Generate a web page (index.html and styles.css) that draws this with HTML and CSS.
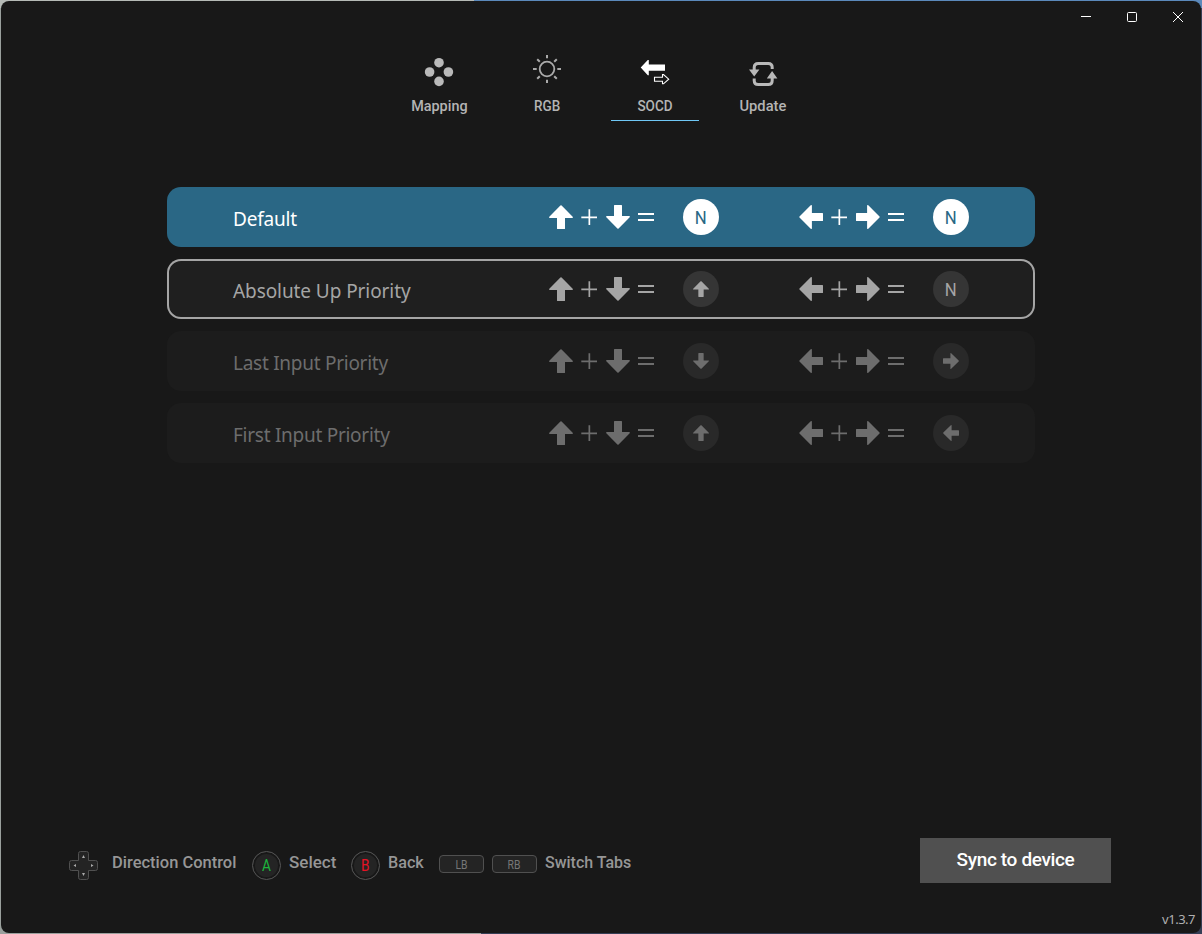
FILE: index.html
```html
<!DOCTYPE html>
<html lang="en">
<head>
    <meta charset="UTF-8">
    <meta name="viewport" content="width=device-width, initial-scale=1.0">
    <title>SOCD</title>
    <link rel="stylesheet" href="styles.css">
</head>
<body>
    <svg class="symbols">
        <symbol id="arrow" viewBox="0 0 24 24"><path d="M11.4.5Q12 0 12.6.5L23.7 11.7Q24.4 12.9 23.2 12.9H16V23.4Q16 24 15.4 24H8.6Q8 24 8 23.4V12.9H.8Q-.4 12.9 .3 11.7Z"/></symbol>
        <symbol id="plus" viewBox="0 0 16 16"><path d="M7.5 .3h1.7v7.2H16v1.8H9.2V16H7.5V9.3H.3V7.5h7.2z"/></symbol>
        <symbol id="equals" viewBox="0 0 16 16"><path d="M0 4h16v2H0zM0 10h16v2H0z"/></symbol>
    </svg>

    <div class="window">
        <div class="titlebar">
            <span class="win-btn"><svg width="10" height="10"><path d="M0 4.5h10"/></svg></span>
            <span class="win-btn"><svg width="10" height="10"><rect x=".5" y=".5" width="9" height="9" rx="1"/></svg></span>
            <span class="win-btn"><svg width="10" height="10"><path d="M0 0l10 10M10 0L0 10"/></svg></span>
        </div>

        <nav class="tabs">
            <div class="tab">
                <svg width="32" height="32" fill="#b9b9b9"><circle cx="16" cy="9.7" r="4.8"/><circle cx="6.6" cy="19" r="4.8"/><circle cx="25.4" cy="19" r="4.8"/><circle cx="16" cy="28.4" r="4.8"/></svg>
                <span class="mapping">Mapping</span>
            </div>
            <div class="tab">
                <svg width="32" height="32" fill="none" stroke="#aaa" stroke-width="2"><circle cx="16" cy="16" r="7.3" stroke-width="1.8"/><path d="M16 2v3.3M16 26.7V30M2 16h3.7M26.3 16H30M6.2 6.2l2.6 2.6M23.2 23.2l2.6 2.6M25.8 6.2l-2.6 2.6M8.8 23.2l-2.6 2.6"/></svg>
                <span class="rgb">RGB</span>
            </div>
            <div class="tab active">
                <svg width="32" height="32" fill="#fff"><path d="M1.7 14.6 8.8 7h1v4.4H26v6.3H9.8v4.5h-1z"/><path d="M15.5 24.2h8v-2.6h1l5.2 4.6-5.2 4.6h-1v-2.6h-8z" fill="none" stroke="#fff" stroke-width="1.1"/></svg>
                <span class="socd">SOCD</span>
            </div>
            <div class="tab">
                <svg width="32" height="32" fill="none" stroke="#b9b9b9" stroke-width="3"><path d="M7.2 17v-2.5Q7.2 10.5 11.2 10.5h10Q25.2 10.5 25.2 14.5V16M7.2 25.5v2Q7.2 31.5 11.2 31.5h10Q25.2 31.5 25.2 27.5V25"/><path d="M2 16.5h10.4l-5.2 7zM19.8 25.5h10.6l-5.3-7.5z" fill="#b9b9b9" stroke="none"/></svg>
                <span class="update">Update</span>
            </div>
        </nav>

        <main class="modes">
            <div class="mode selected">
                <span class="name n1">Default</span>
                <div class="rule"><svg><use href="#arrow"/></svg><svg class="op"><use href="#plus"/></svg><svg class="down"><use href="#arrow"/></svg><svg class="op"><use href="#equals"/></svg><span class="result"><span class="letter">N</span></span></div>
                <div class="rule"><svg class="left"><use href="#arrow"/></svg><svg class="op"><use href="#plus"/></svg><svg class="right"><use href="#arrow"/></svg><svg class="op"><use href="#equals"/></svg><span class="result"><span class="letter">N</span></span></div>
            </div>
            <div class="mode focused">
                <span class="name n2">Absolute Up Priority</span>
                <div class="rule"><svg><use href="#arrow"/></svg><svg class="op"><use href="#plus"/></svg><svg class="down"><use href="#arrow"/></svg><svg class="op"><use href="#equals"/></svg><span class="result"><svg><use href="#arrow"/></svg></span></div>
                <div class="rule"><svg class="left"><use href="#arrow"/></svg><svg class="op"><use href="#plus"/></svg><svg class="right"><use href="#arrow"/></svg><svg class="op"><use href="#equals"/></svg><span class="result"><span class="letter">N</span></span></div>
            </div>
            <div class="mode">
                <span class="name n3">Last Input Priority</span>
                <div class="rule"><svg><use href="#arrow"/></svg><svg class="op"><use href="#plus"/></svg><svg class="down"><use href="#arrow"/></svg><svg class="op"><use href="#equals"/></svg><span class="result"><svg class="down"><use href="#arrow"/></svg></span></div>
                <div class="rule"><svg class="left"><use href="#arrow"/></svg><svg class="op"><use href="#plus"/></svg><svg class="right"><use href="#arrow"/></svg><svg class="op"><use href="#equals"/></svg><span class="result"><svg class="right"><use href="#arrow"/></svg></span></div>
            </div>
            <div class="mode">
                <span class="name n4">First Input Priority</span>
                <div class="rule"><svg><use href="#arrow"/></svg><svg class="op"><use href="#plus"/></svg><svg class="down"><use href="#arrow"/></svg><svg class="op"><use href="#equals"/></svg><span class="result"><svg><use href="#arrow"/></svg></span></div>
                <div class="rule"><svg class="left"><use href="#arrow"/></svg><svg class="op"><use href="#plus"/></svg><svg class="right"><use href="#arrow"/></svg><svg class="op"><use href="#equals"/></svg><span class="result"><svg class="left"><use href="#arrow"/></svg></span></div>
            </div>
        </main>

        <footer class="footer">
            <div class="hints">
                <div class="hint dpad">
                    <svg width="29" height="29"><path d="M11.5.5h6Q19.5.5 19.5 2.5v7h7Q28.5 9.5 28.5 11.5v6Q28.5 19.5 26.5 19.5h-7v7Q19.5 28.5 17.5 28.5h-6Q9.5 28.5 9.5 26.5v-7h-7Q.5 19.5.5 17.5v-6Q.5 9.5 2.5 9.5h7v-7Q9.5.5 11.5.5z" fill="#242424" stroke="#505050"/><path d="M14.5 4 16 7h-3zM14.5 25 16 22h-3zM4.5 14.5 7 13v3zM24.5 14.5 22 13v3z" fill="#aaa"/></svg>
                    <span class="text">Direction Control</span>
                </div>
                <div class="hint"><span class="key a"><span class="letter">A</span></span><span class="text select">Select</span></div>
                <div class="hint"><span class="key b"><span class="letter">B</span></span><span class="text back">Back</span></div>
                <div class="hint"><span class="bumper"><span class="letter">LB</span></span><span class="bumper"><span class="letter">RB</span></span><span class="text switch">Switch Tabs</span></div>
            </div>
            <button class="sync">Sync to device</button>
        </footer>
        <div class="version">v1.3.7</div>
    </div>
</body>
</html>
```
FILE: styles.css
```css
* {
    box-sizing: border-box;
}
body {
    margin: 0;
    height: 934px;
    padding: 1px;
    overflow: hidden;
    background: linear-gradient(90deg, #b5bab6 474px, #5b89bb 474px) top / 100% 8px no-repeat,
        linear-gradient(90deg, #9aa09d 40%, #353e55 40%);
    font-family: Roboto, "Liberation Sans", sans-serif;
}
svg {
    display: block;
    flex: none;
    overflow: visible;
}
.symbols {
    display: none;
}
.window {
    display: flex;
    flex-direction: column;
    height: 932px;
    background-color: #181818;
    border-radius: 8px;
    overflow: hidden;
}
.titlebar {
    display: flex;
    justify-content: flex-end;
    height: 32px;
}
.win-btn {
    display: flex;
    align-items: center;
    justify-content: center;
    width: 46px;
}
.win-btn svg {
    fill: none;
    stroke: #fff;
}

/* tabs */
.tabs {
    display: flex;
    justify-content: center;
    gap: 20px;
    height: 88px;
}
.tab {
    display: flex;
    flex-direction: column;
    align-items: center;
    width: 88px;
    padding-top: 20px;
    color: #b4b4b4;
    font-size: 15px;
    font-weight: 500;
    line-height: 20px;
    white-space: nowrap;
}
.tab span {
    margin-top: 11px;
    transform: scaleX(.96);
}
.tab .rgb,
.tab .socd {
    transform: translateX(.5px) scaleX(.9);
}
.tab .update {
    transform: scaleX(.98);
}
.tab.active {
    border-bottom: 1px solid #6fc7f5;
}

/* mode list */
.modes {
    display: flex;
    flex-direction: column;
    gap: 12px;
    width: 868px;
    margin: 66px 0 0 166px;
    flex: 1;
}
.mode {
    display: grid;
    grid-template-columns: 316px 170px 170px;
    align-items: center;
    height: 60px;
    padding-left: 66px;
    border-radius: 14px;
    background-color: #1c1c1c;
    color: #6d6d6d;
}
.mode .rule + .rule {
    margin-left: 80px;
}
.mode.selected {
    background-color: #2a6785;
    color: #fff;
}
.mode.focused {
    background-color: #1f1f1f;
    color: #a5a5a5;
    box-shadow: inset 0 0 0 2px #a5a5a5;
}
.name {
    margin-top: 4px;
    font-family: "Noto Sans", sans-serif;
    font-size: 19px;
    line-height: 28px;
    white-space: nowrap;
}
.n1 {
    letter-spacing: -.2px;
}
.n2 {
    letter-spacing: -.08px;
}
.n3,
.n4 {
    letter-spacing: -.27px;
}
.rule {
    display: flex;
    align-items: center;
    width: 170px;
    gap: 8px;
}
.rule svg {
    width: 24px;
    height: 24px;
    fill: currentColor;
}
.rule .op {
    width: 16px;
    height: 16px;
}
.rule .op + svg {
    margin-left: 1px;
}
.down {
    transform: rotate(180deg);
}
.left {
    transform: rotate(-90deg);
}
.right {
    transform: rotate(90deg);
}
.result {
    display: flex;
    align-items: center;
    justify-content: center;
    width: 36px;
    height: 36px;
    margin-left: auto;
    border-radius: 50%;
    background-color: #292929;
    font-size: 19px;
}
.rule .result svg {
    width: 16px;
    height: 16px;
}
.focused .result {
    background-color: #353535;
}
.selected .result {
    background-color: #fff;
    color: #2a6785;
}
.letter {
    transform: scaleX(.88);
}

/* bottom bar */
.footer {
    display: flex;
    justify-content: space-between;
    height: 45px;
    margin: 0 90px 20px 68px;
}
.hints {
    display: grid;
    grid-template-columns: 183px 99px 88px auto;
    align-items: center;
    padding-top: 10px;
}
.hint {
    display: flex;
    align-items: center;
    gap: 8px;
    height: 29px;
    white-space: nowrap;
}
.hint.dpad {
    gap: 14px;
}
.text {
    margin-top: -7px;
    color: #969696;
    font-size: 17px;
    font-weight: 500;
    line-height: 20px;
    transform: scaleX(.97);
    transform-origin: left;
}
.text.select {
    transform: none;
}
.text.back {
    transform: scaleX(.95);
}
.text.switch {
    transform: scaleX(.94);
}
.key {
    display: flex;
    align-items: center;
    justify-content: center;
    width: 29px;
    height: 29px;
    border: 1px solid #555;
    border-radius: 50%;
    background-color: #242424;
    box-shadow: inset 0 0 0 2px #181818;
    font-size: 17px;
}
.key .letter {
    margin-top: -1px;
    transform: scaleX(.8);
}
.key.a {
    color: #1cb53c;
}
.key.b {
    color: #e81224;
}
.bumper {
    display: flex;
    align-items: center;
    justify-content: center;
    width: 45px;
    height: 18px;
    margin-top: -3px;
    border: 1px solid #505050;
    border-radius: 4px;
    background-color: #242424;
    color: #777;
    font-size: 13px;
}
.bumper .letter {
    margin-top: 1px;
    transform: scaleX(.8);
}
.sync {
    width: 191px;
    height: 45px;
    padding: 0 0 2px;
    border: none;
    background-color: #505050;
    color: #fff;
    font-family: inherit;
    font-size: 19px;
    font-weight: 500;
    letter-spacing: -.35px;
}
.version {
    height: 30px;
    padding-right: 6px;
    color: #b0b0b0;
    font-family: "Noto Sans", sans-serif;
    font-size: 13px;
    line-height: 32px;
    letter-spacing: -.5px;
    text-align: right;
}
```
